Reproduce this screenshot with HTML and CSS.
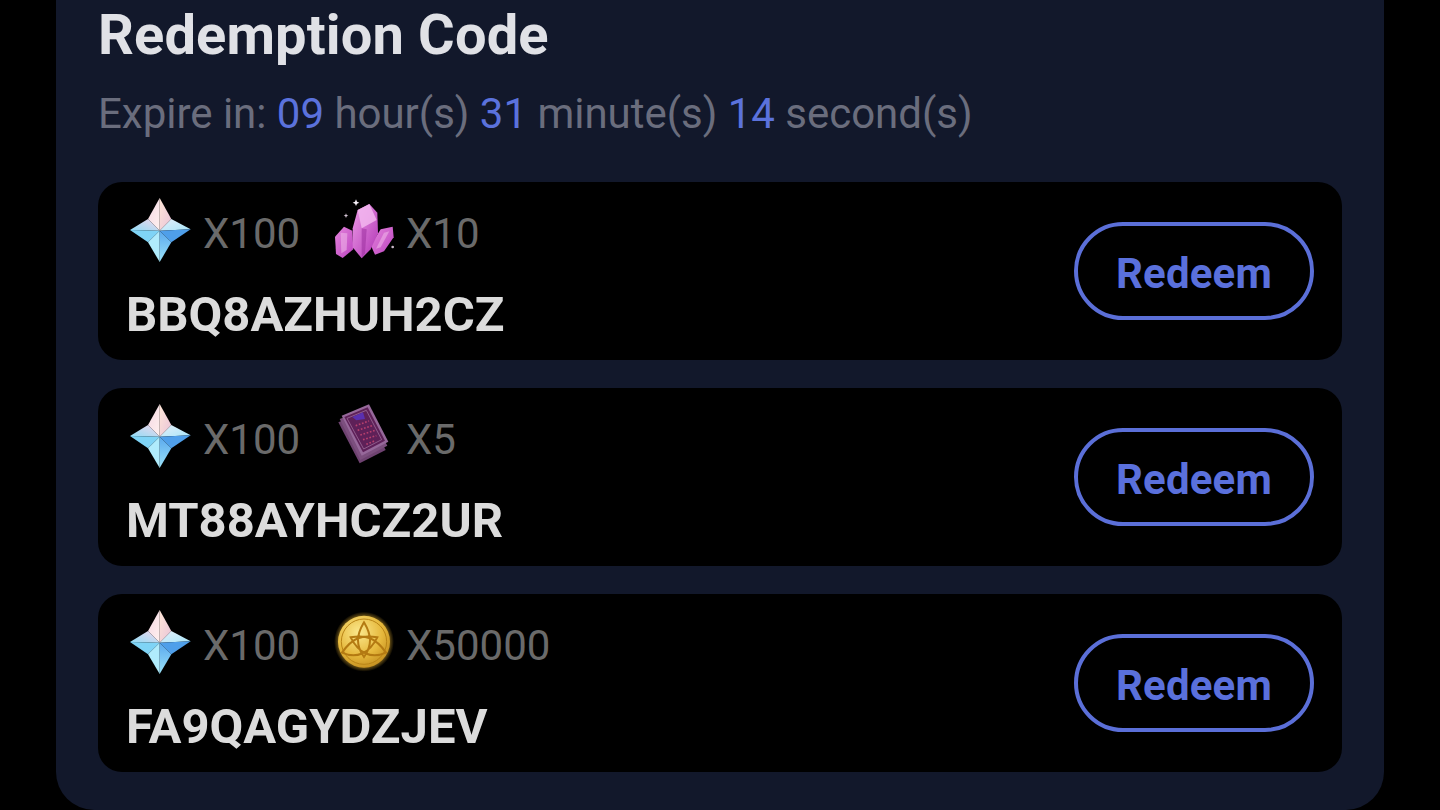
FILE: index.html
```html
<!DOCTYPE html>
<html lang="en">
<head>
<meta charset="utf-8">
<title>Redemption Code</title>
<link rel="stylesheet" href="styles.css">
</head>
<body>
<svg class="defs" aria-hidden="true">
  <defs>
    <linearGradient id="gTL" x1="0" y1="0" x2="1" y2="1"><stop offset="0" stop-color="#f4d8e4"/><stop offset="1" stop-color="#fff0ee"/></linearGradient>
    <linearGradient id="gTR" x1="0" y1="0" x2="1" y2="1"><stop offset="0" stop-color="#ffe6d8"/><stop offset="1" stop-color="#e8c2d8"/></linearGradient>
    <linearGradient id="gL" x1="0" y1="1" x2="1" y2="0"><stop offset="0" stop-color="#8fdcf6"/><stop offset="1" stop-color="#f2d6ea"/></linearGradient>
    <linearGradient id="gR" x1="1" y1="1" x2="0" y2="0"><stop offset="0" stop-color="#a8e6fa"/><stop offset="1" stop-color="#e6eef8"/></linearGradient>
    <linearGradient id="gB" x1="0" y1="0" x2="0" y2="1"><stop offset="0" stop-color="#5aa8ee"/><stop offset="1" stop-color="#9ae2f8"/></linearGradient>
    <linearGradient id="gP" x1="0" y1="0" x2="1" y2="1"><stop offset="0" stop-color="#ee9ce8"/><stop offset="1" stop-color="#b034b4"/></linearGradient>
    <linearGradient id="gP2" x1="0" y1="0" x2="1" y2="1"><stop offset="0" stop-color="#e484dc"/><stop offset="1" stop-color="#bc44c0"/></linearGradient>
    <radialGradient id="gCoin" cx="0.4" cy="0.32" r="0.75"><stop offset="0" stop-color="#fbe88c"/><stop offset="0.6" stop-color="#e6b83c"/><stop offset="1" stop-color="#c08a1c"/></radialGradient>
    <radialGradient id="gGlow"><stop offset="0.8" stop-color="#c89a28" stop-opacity="0.7"/><stop offset="1" stop-color="#c89a28" stop-opacity="0"/></radialGradient>
    <g id="star">
      <polygon points="122,24 87,87 122,122" fill="url(#gTL)"/>
      <polygon points="122,24 157,87 122,122" fill="url(#gTR)"/>
      <polygon points="33,120 87,87 122,122" fill="url(#gL)"/>
      <polygon points="215,118 157,87 122,122" fill="url(#gR)"/>
      <polygon points="33,120 87,157 122,122" fill="#7fd4f6"/>
      <polygon points="215,118 157,157 122,122" fill="#4f9fea"/>
      <polygon points="122,216 87,157 122,122" fill="#b0ecfc"/>
      <polygon points="122,216 157,157 122,122" fill="url(#gB)"/>
    </g>
    <g id="crystal">
      <polygon points="72,110 97,122 100,178 68,204 48,192 45,140" fill="url(#gP2)"/>
      <polygon points="62,128 82,130 80,180 64,190" fill="#eeb0e8" opacity="0.6"/>
      <polygon points="182,118 218,110 221,142 192,184 165,194 152,165" fill="url(#gP2)"/>
      <polygon points="192,128 208,124 182,172 168,176" fill="#eeb0e8" opacity="0.6"/>
      <polygon points="148,42 172,68 174,130 152,178 125,205 98,172 98,115 113,60" fill="url(#gP)"/>
      <polygon points="148,42 113,60 125,115 170,90" fill="#f2b6ee" opacity="0.85"/>
      <polygon points="125,115 140,118 135,190 125,205" fill="#9a2f9e" opacity="0.55"/>
      <polygon points="108,28 111,35 118,38 111,41 108,48 105,41 98,38 105,35" fill="#f6f0f8"/>
      <polygon points="78,70 80,75 85,77 80,79 78,84 76,79 71,77 76,75" fill="#d8c8d8"/>
      <circle cx="218" cy="171" r="4" fill="#c8b8c8"/>
    </g>
    <g id="book">
      <polygon points="58,82 140,50 200,165 122,205" fill="#6e4270"/>
      <polygon points="62,72 145,40 205,152 124,195" fill="#7c4f7e"/>
      <polygon points="68,62 150,28 208,140 128,182" fill="#96689a"/>
      <polygon points="76,66 146,37 198,137 132,172" fill="#5e2058"/>
      <polygon points="84,70 142,46 188,134 134,162" class="book-frame"/>
      <polygon points="100,66 132,52 138,72 112,76" fill="#5a2fb0"/>
      <path d="M110 92 L150 78 M116 106 L160 92 M124 120 L168 106 M132 134 L172 122 M142 148 L166 138" class="book-lines"/>
    </g>
    <g id="coin">
      <circle cx="132" cy="110" r="90" fill="url(#gGlow)"/>
      <circle cx="132" cy="110" r="78" fill="url(#gCoin)"/>
      <circle cx="132" cy="110" r="68" class="coin-ring"/>
      <path d="M132 52 C108 92 108 122 132 156 C156 122 156 92 132 52 Z M66 143 C98 97 126 89 172 97 C148 145 110 163 66 143 Z M198 143 C166 97 138 89 92 97 C116 145 154 163 198 143 Z" class="coin-knot"/>
    </g>
  </defs>
</svg>

<main class="panel">
  <h1 class="title">Redemption Code</h1>
  <p class="expire">Expire in: <span class="num">09</span> hour(s) <span class="num">31</span> minute(s) <span class="num">14</span> second(s)</p>

  <ul class="cards">
    <li class="card">
      <div class="info">
        <div class="rewards">
          <svg class="icon icon-first" viewBox="27 24 192 192"><use href="#star"/></svg>
          <span class="qty qty-first">X100</span>
          <svg class="icon" viewBox="33 24 192 192"><use href="#crystal"/></svg>
          <span class="qty">X10</span>
        </div>
        <div class="code">BBQ8AZHUH2CZ</div>
      </div>
      <button class="redeem">Redeem</button>
    </li>
    <li class="card">
      <div class="info">
        <div class="rewards">
          <svg class="icon icon-first" viewBox="27 24 192 192"><use href="#star"/></svg>
          <span class="qty qty-first">X100</span>
          <svg class="icon" viewBox="36 27 192 192"><use href="#book"/></svg>
          <span class="qty">X5</span>
        </div>
        <div class="code">MT88AYHCZ2UR</div>
      </div>
      <button class="redeem">Redeem</button>
    </li>
    <li class="card">
      <div class="info">
        <div class="rewards">
          <svg class="icon icon-first" viewBox="27 24 192 192"><use href="#star"/></svg>
          <span class="qty qty-first">X100</span>
          <svg class="icon" viewBox="33 15 192 192"><use href="#coin"/></svg>
          <span class="qty">X50000</span>
        </div>
        <div class="code">FA9QAGYDZJEV</div>
      </div>
      <button class="redeem">Redeem</button>
    </li>
  </ul>
</main>
</body>
</html>
```

FILE: styles.css
```css
* { box-sizing: border-box; }

html, body {
  margin: 0;
  padding: 0;
  height: 810px;
  overflow: hidden;
  background: #000;
  font-family: Roboto, "Liberation Sans", sans-serif;
}

.defs {
  display: block;
  width: 0;
  height: 0;
}

.panel {
  height: 810px;
  margin: 0 56px;
  padding: 3px 42px 38px;
  background: #12182b;
  border-radius: 0 0 38px 38px;
}

.title {
  margin: 0;
  font-size: 56px;
  line-height: 64px;
  font-weight: 700;
  letter-spacing: 0.14px;
  color: #e0e1e6;
}

.expire {
  margin: 22px 0 43px;
  font-size: 42px;
  line-height: 50px;
  letter-spacing: -0.02px;
  color: #6a6d7d;
}

.num { color: #5b72dc; }

.cards {
  list-style: none;
  margin: 0;
  padding: 0;
  display: flex;
  flex-direction: column;
  gap: 28px;
}

.card {
  height: 178px;
  padding: 0 28px;
  display: flex;
  align-items: center;
  justify-content: space-between;
  background: #000;
  border-radius: 24px;
}

.info {
  display: flex;
  flex-direction: column;
  gap: 25px;
  align-self: flex-start;
  padding-top: 16px;
}

.rewards {
  display: flex;
  align-items: center;
  height: 64px;
}

.icon {
  display: block;
  width: 64px;
  height: 64px;
  flex: none;
  filter: blur(0.4px);
}

.icon-first {
  margin-left: 2px;
}

.qty {
  margin-left: 11px;
  padding-top: 8px;
  font-size: 42px;
  line-height: 50px;
  color: #6a6a6a;
}

.qty-first {
  width: 128px;
}

.code {
  font-size: 49px;
  line-height: 56px;
  font-weight: 700;
  color: #dcdcdc;
}

.redeem {
  width: 240px;
  height: 98px;
  padding: 4px 0 0;
  background: transparent;
  border: 4px solid #5b6fd8;
  border-radius: 49px;
  font-family: Roboto, "Liberation Sans", sans-serif;
  font-size: 42px;
  font-weight: 700;
  letter-spacing: 0.15px;
  color: #5a70dc;
}

.book-frame {
  fill: none;
  stroke: #a77aa6;
  stroke-width: 2;
}

.book-lines {
  fill: none;
  stroke: #b8406e;
  stroke-width: 5;
  stroke-dasharray: 5 5;
}

.coin-ring {
  fill: none;
  stroke: #b98416;
  stroke-width: 3;
}

.coin-knot {
  fill: none;
  stroke: #b47a12;
  stroke-width: 6;
}
```
